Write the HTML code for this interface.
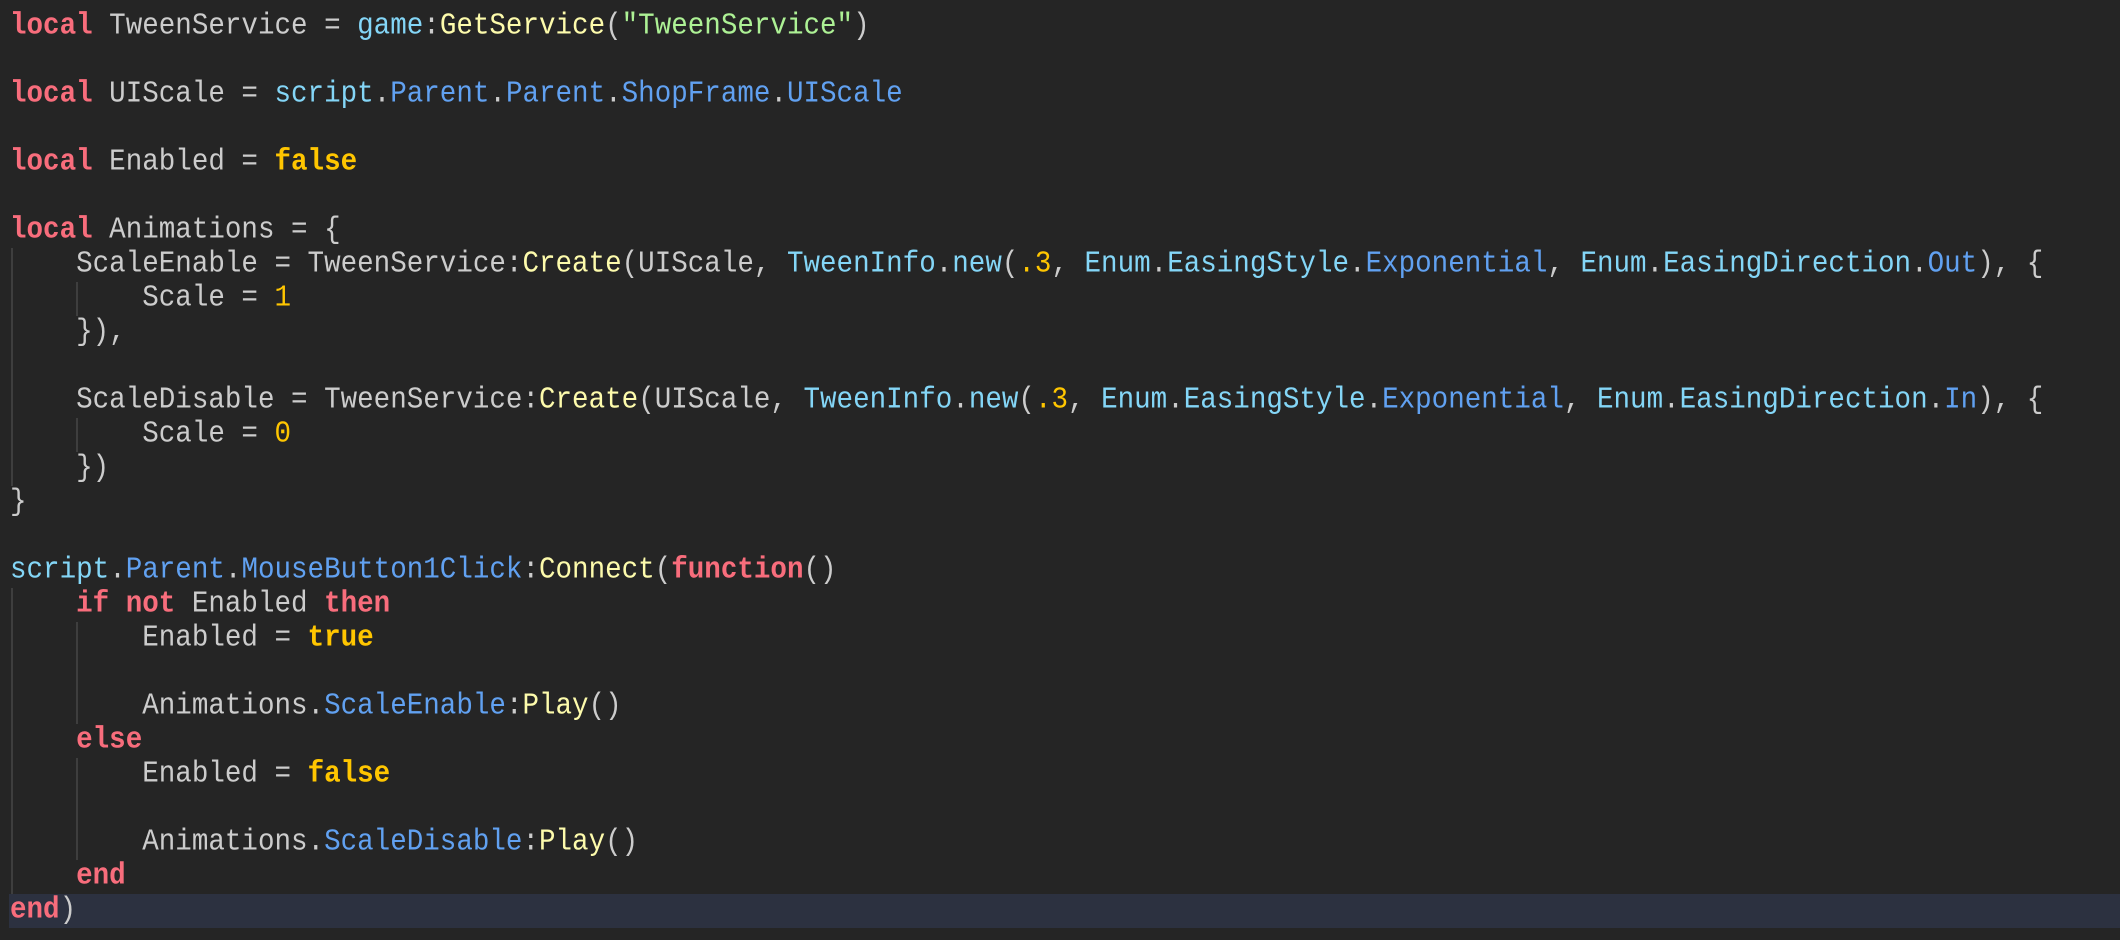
<!DOCTYPE html>
<html><head><meta charset="utf-8"><style>
html,body{margin:0;padding:0;}
body{width:2120px;height:940px;background:#252525;position:relative;overflow:hidden;font-family:"Liberation Mono",monospace;font-size:27.55px;color:#cccccc;}
.l{position:absolute;left:10px;height:34px;line-height:34px;white-space:pre;transform:scaleY(1.12);transform-origin:50% 60%;}
.k{color:#f86d7c;font-weight:bold;}
.g{color:#84d6f7;}
.m{color:#fdfbac;}
.s{color:#adf195;}
.p{color:#61a1f1;}
.b{color:#ffc600;font-weight:bold;}
.n{color:#ffc600;}
.gd{position:absolute;width:2px;background:#3e3e3e;}
.hl{position:absolute;left:9px;right:0;top:894px;height:34px;background:#2c3140;}
</style></head><body>
<div class="hl"></div>
<div class="gd" style="left:11px;top:248px;height:238px"></div>
<div class="gd" style="left:76px;top:282px;height:34px"></div>
<div class="gd" style="left:76px;top:418px;height:34px"></div>
<div class="gd" style="left:11px;top:588px;height:306px"></div>
<div class="gd" style="left:76px;top:622px;height:102px"></div>
<div class="gd" style="left:76px;top:758px;height:102px"></div>
<div class="l" style="top:10px"><span class="k">local</span> TweenService = <span class="g">game</span>:<span class="m">GetService</span>(<span class="s">"TweenService"</span>)</div>
<div class="l" style="top:78px"><span class="k">local</span> UIScale = <span class="g">script</span>.<span class="p">Parent</span>.<span class="p">Parent</span>.<span class="p">ShopFrame</span>.<span class="p">UIScale</span></div>
<div class="l" style="top:146px"><span class="k">local</span> Enabled = <span class="b">false</span></div>
<div class="l" style="top:214px"><span class="k">local</span> Animations = {</div>
<div class="l" style="top:248px">    ScaleEnable = TweenService:<span class="m">Create</span>(UIScale, <span class="g">TweenInfo</span>.<span class="g">new</span>(<span class="n">.3</span>, <span class="g">Enum</span>.<span class="g">EasingStyle</span>.<span class="p">Exponential</span>, <span class="g">Enum</span>.<span class="g">EasingDirection</span>.<span class="p">Out</span>), {</div>
<div class="l" style="top:282px">        Scale = <span class="n">1</span></div>
<div class="l" style="top:316px">    }),</div>
<div class="l" style="top:384px">    ScaleDisable = TweenService:<span class="m">Create</span>(UIScale, <span class="g">TweenInfo</span>.<span class="g">new</span>(<span class="n">.3</span>, <span class="g">Enum</span>.<span class="g">EasingStyle</span>.<span class="p">Exponential</span>, <span class="g">Enum</span>.<span class="g">EasingDirection</span>.<span class="p">In</span>), {</div>
<div class="l" style="top:418px">        Scale = <span class="n">0</span></div>
<div class="l" style="top:452px">    })</div>
<div class="l" style="top:486px">}</div>
<div class="l" style="top:554px"><span class="g">script</span>.<span class="p">Parent</span>.<span class="p">MouseButton1Click</span>:<span class="m">Connect</span>(<span class="k">function</span>()</div>
<div class="l" style="top:588px">    <span class="k">if</span> <span class="k">not</span> Enabled <span class="k">then</span></div>
<div class="l" style="top:622px">        Enabled = <span class="b">true</span></div>
<div class="l" style="top:690px">        Animations.<span class="p">ScaleEnable</span>:<span class="m">Play</span>()</div>
<div class="l" style="top:724px">    <span class="k">else</span></div>
<div class="l" style="top:758px">        Enabled = <span class="b">false</span></div>
<div class="l" style="top:826px">        Animations.<span class="p">ScaleDisable</span>:<span class="m">Play</span>()</div>
<div class="l" style="top:860px">    <span class="k">end</span></div>
<div class="l" style="top:894px"><span class="k">end</span>)</div>
</body></html>
